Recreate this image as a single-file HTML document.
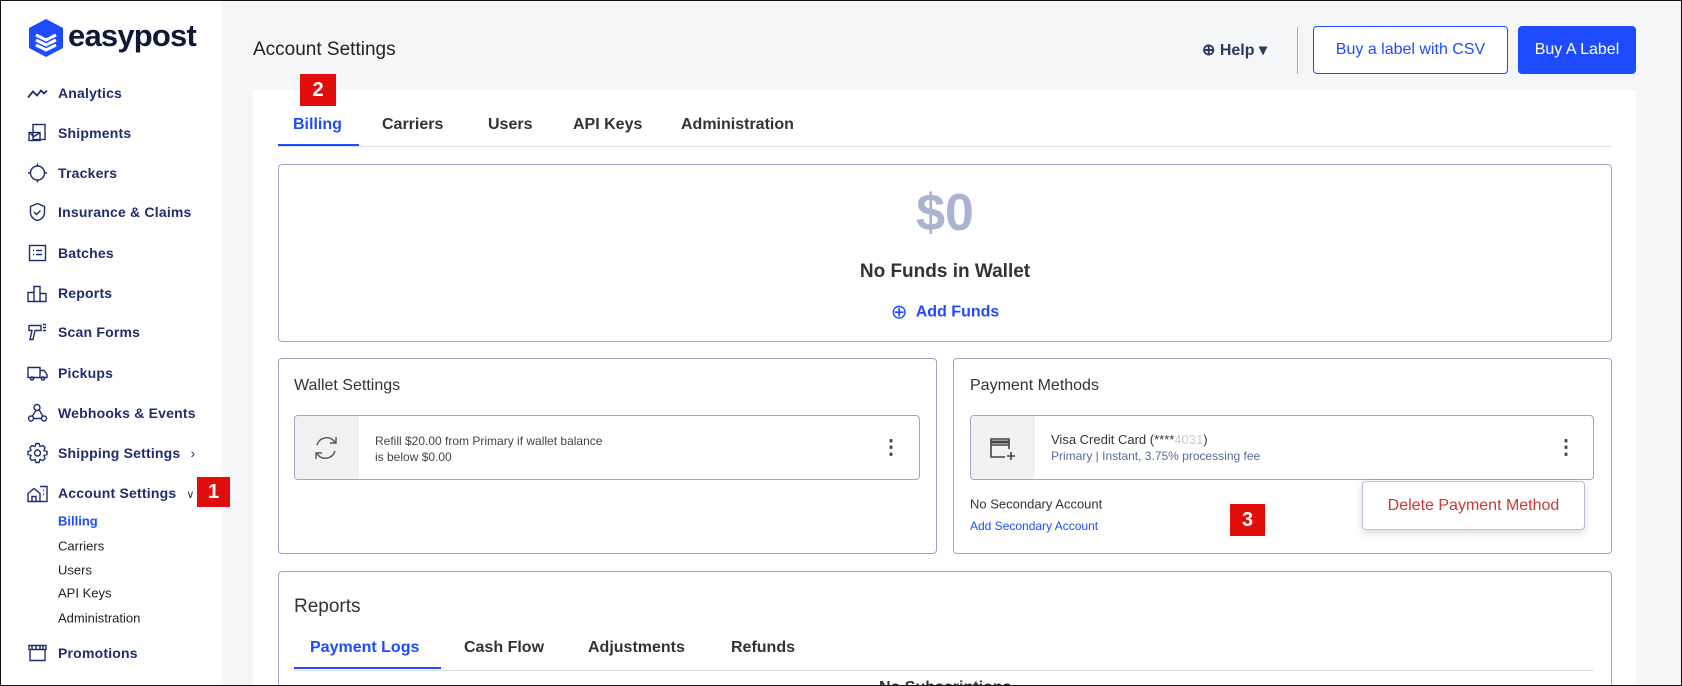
<!DOCTYPE html>
<html><head><meta charset="utf-8"><style>
*{box-sizing:border-box;margin:0;padding:0}
html,body{width:1682px;height:686px;overflow:hidden}
body{background:#f4f6f8;font-family:"Liberation Sans",sans-serif}
#w{position:relative;width:1682px;height:686px;overflow:hidden;border:1px solid #111;background:#f4f6f8}
.a{position:absolute}
.side{left:0;top:0;width:221px;height:686px;background:#fff}
.nav{left:57px;font-size:14px;color:#1f2d6e;font-weight:bold;letter-spacing:.2px;transform:translateY(-50%)}
.ic{left:26px;width:21px;height:21px;transform:translateY(-50%)}
.sub{left:57px;font-size:13px;color:#222;transform:translateY(-50%)}
.badge{background:#e10d0d;color:#fff;font-weight:bold;font-size:20px;display:flex;align-items:center;justify-content:center}
.box{border:1px solid #9aa6c8;border-radius:4px;background:#fff}
.c{transform:translateY(-50%)}
</style></head><body><div id="w">
<div class="a side"></div>
<svg class="a" style="left:26px;top:17px" width="38" height="40" viewBox="0 0 38 40"><path d="M19 1 36 10v20L19 39 2 30V10z" fill="#1f4bff"/><path d="M9 17l10 5 10-5M9 22l10 5 10-5M9 27l10 5 10-5" stroke="#fff" stroke-width="3" fill="none"/></svg>
<div class="a" style="left:67px;top:17px;font-size:31px;font-weight:bold;color:#10183a;letter-spacing:-0.8px">easypost</div>

<svg class="a ic" style="top:92px" viewBox="0 0 21 21"><path d="M1 15l5-6 4 4 4-5 3 3 3-3" stroke="#1f2d6e" stroke-width="1.8" fill="none"/></svg><div class="a nav" style="top:92px">Analytics</div>
<svg class="a ic" style="top:132px" viewBox="0 0 21 21" fill="none" stroke="#1f2d6e" stroke-width="1.4"><rect x="6" y="2" width="12" height="15"/><rect x="2" y="10" width="11" height="8"/><path d="M2 10l5 4 6-4"/></svg><div class="a nav" style="top:132px">Shipments</div>
<svg class="a ic" style="top:172px" viewBox="0 0 21 21" fill="none" stroke="#1f2d6e" stroke-width="1.4"><circle cx="10.5" cy="10.5" r="7"/><path d="M10.5 1v3M10.5 17v3M1 10.5h3M17 10.5h3"/></svg><div class="a nav" style="top:172px">Trackers</div>
<svg class="a ic" style="top:211px" viewBox="0 0 21 21" fill="none" stroke="#1f2d6e" stroke-width="1.4"><path d="M10.5 2l7 3v6c0 4-3 7-7 8-4-1-7-4-7-8V5z"/><path d="M7 10.5l2.5 2.5 4-4"/></svg><div class="a nav" style="top:211px">Insurance &amp; Claims</div>
<svg class="a ic" style="top:252px" viewBox="0 0 21 21" fill="none" stroke="#1f2d6e" stroke-width="1.4"><rect x="2.5" y="3" width="16" height="15"/><path d="M6 8h1M9 8h6M6 12h1M9 12h6"/></svg><div class="a nav" style="top:252px">Batches</div>
<svg class="a ic" style="top:292px" viewBox="0 0 21 21" fill="none" stroke="#1f2d6e" stroke-width="1.4"><path d="M1 19V10h6V4h6v7h6v8zM7 10v9M13 11v8"/></svg><div class="a nav" style="top:292px">Reports</div>
<svg class="a ic" style="top:331px" viewBox="0 0 21 21" fill="none" stroke="#1f2d6e" stroke-width="1.4"><path d="M2 4h12v5H8l-2 9H3l2-9H2zM16 3h3M16 6h3M16 9h3"/></svg><div class="a nav" style="top:331px">Scan Forms</div>
<svg class="a ic" style="top:372px" viewBox="0 0 21 21" fill="none" stroke="#1f2d6e" stroke-width="1.4"><path d="M1 5h12v10H1zM13 8h4l3 4v3h-7"/><circle cx="5" cy="16" r="1.6"/><circle cx="16" cy="16" r="1.6"/></svg><div class="a nav" style="top:372px">Pickups</div>
<svg class="a ic" style="top:412px" viewBox="0 0 21 21" fill="none" stroke="#1f2d6e" stroke-width="1.4"><circle cx="10" cy="5" r="3"/><circle cx="4" cy="16" r="2.5"/><circle cx="17" cy="16" r="2.5"/><path d="M9 8l-4 6M7 16h8M12 7l4 7"/></svg><div class="a nav" style="top:412px">Webhooks &amp; Events</div>
<svg class="a ic" style="top:452px" viewBox="0 0 21 21" fill="none" stroke="#1f2d6e" stroke-width="1.4"><circle cx="10.5" cy="10.5" r="3"/><path d="M9 1h3l1 3 3-1 2 2-1 3 3 1v3l-3 1 1 3-2 2-3-1-1 3H9l-1-3-3 1-2-2 1-3-3-1V9l3-1-1-3 2-2 3 1z"/></svg><div class="a nav" style="top:452px">Shipping Settings <span style="font-weight:normal;margin-left:6px">›</span></div>
<svg class="a ic" style="top:492px" viewBox="0 0 21 21" fill="none" stroke="#1f2d6e" stroke-width="1.4"><path d="M1 19V11l6-5 6 5v8zM13 4h7v15h-7M5 19v-5h4v5M16 8h1M16 12h1"/></svg><div class="a nav" style="top:492px">Account Settings <span style="font-weight:normal;margin-left:6px;font-size:11px">∨</span></div>
<div class="a sub" style="top:520px;color:#1f4bff;font-weight:bold">Billing</div>
<div class="a sub" style="top:545px">Carriers</div>
<div class="a sub" style="top:569px">Users</div>
<div class="a sub" style="top:592px">API Keys</div>
<div class="a sub" style="top:617px">Administration</div>
<svg class="a ic" style="top:652px" viewBox="0 0 21 21" fill="none" stroke="#1f2d6e" stroke-width="1.4"><path d="M2 3h17v4H2zM3 7v11h15V7M5 3v4M9 3v4M13 3v4M16 3v4"/></svg><div class="a nav" style="top:652px">Promotions</div>
<div class="a badge" style="left:196px;top:476px;width:33px;height:30px">1</div>

<div class="a c" style="left:252px;top:49px;font-size:19px;color:#222">Account Settings</div>
<div class="a c" style="left:1201px;top:49px;font-size:16px;font-weight:bold;color:#2d3a5e">⊕ Help ▾</div>
<div class="a" style="left:1296px;top:26px;width:1px;height:47px;background:#aab"></div>
<div class="a" style="left:1312px;top:25px;width:195px;height:48px;border:1px solid #1f4bff;border-radius:4px;color:#1f4bff;font-size:16px;display:flex;align-items:center;justify-content:center;background:#fff">Buy a label with CSV</div>
<div class="a" style="left:1517px;top:25px;width:118px;height:48px;background:#1f4bff;border-radius:4px;color:#fff;font-size:16px;display:flex;align-items:center;justify-content:center">Buy A Label</div>

<div class="a" style="left:252px;top:89px;width:1383px;height:600px;background:#fff"></div>
<div class="a badge" style="left:299px;top:73px;width:36px;height:32px">2</div>
<div class="a" style="left:277px;top:145px;width:1334px;height:1px;background:#dde1ea"></div>
<div class="a" style="left:277px;top:143px;width:81px;height:2px;background:#1f4bff"></div>
<div class="a c" style="left:292px;top:124px;font-size:16px;font-weight:bold;color:#1f4bff">Billing</div>
<div class="a c" style="left:381px;top:124px;font-size:16px;font-weight:bold;color:#333">Carriers</div>
<div class="a c" style="left:487px;top:124px;font-size:16px;font-weight:bold;color:#333">Users</div>
<div class="a c" style="left:572px;top:124px;font-size:16px;font-weight:bold;color:#333">API Keys</div>
<div class="a c" style="left:680px;top:124px;font-size:16px;font-weight:bold;color:#333">Administration</div>

<div class="a box" style="left:277px;top:163px;width:1334px;height:178px"></div>
<div class="a c" style="left:277px;width:1334px;text-align:center;top:212px;font-size:52px;font-weight:bold;color:#a9b4cf">$0</div>
<div class="a c" style="left:277px;width:1334px;text-align:center;top:271px;font-size:19px;font-weight:bold;color:#333">No Funds in Wallet</div>
<div class="a c" style="left:277px;width:1334px;text-align:center;top:311px;font-size:16px;font-weight:bold;color:#1f4bff"><span style="font-weight:normal;font-size:20px;vertical-align:-2px">⊕</span>&nbsp; Add Funds</div>

<div class="a box" style="left:277px;top:357px;width:659px;height:196px"></div>
<div class="a c" style="left:293px;top:385px;font-size:16px;color:#333">Wallet Settings</div>
<div class="a box" style="left:293px;top:414px;width:626px;height:65px;overflow:hidden"><div style="width:64px;height:100%;background:#f1f1f1"></div></div>
<svg class="a" style="left:310px;top:432px" width="30" height="30" viewBox="0 0 30 30" fill="none" stroke="#555" stroke-width="1.4"><path d="M6 12a10 10 0 0 1 17-4l2 2M24 18a10 10 0 0 1-17 4l-2-2M25 4v6h-6M5 26v-6h6"/></svg>
<div class="a" style="left:374px;top:432px;font-size:12px;color:#444;line-height:16px">Refill $20.00 from Primary if wallet balance<br>is below $0.00</div>
<div class="a c" style="left:880px;top:446px;font-size:20px;color:#444;font-weight:bold">⋮</div>

<div class="a box" style="left:952px;top:357px;width:659px;height:196px"></div>
<div class="a c" style="left:969px;top:385px;font-size:16px;color:#333">Payment Methods</div>
<div class="a box" style="left:969px;top:414px;width:624px;height:65px;overflow:hidden"><div style="width:64px;height:100%;background:#f1f1f1"></div></div>
<svg class="a" style="left:988px;top:436px" width="28" height="24" viewBox="0 0 28 24" fill="none" stroke="#444" stroke-width="1.6"><path d="M16 20H2V2h18v10M2 8h18"/><path d="M2 5h18" stroke-width="3"/><path d="M22 15v8M18 19h8"/></svg>
<div class="a" style="left:1050px;top:431px;font-size:13px;color:#333">Visa Credit Card (****<span style="color:#ccc">4031</span>)</div>
<div class="a" style="left:1050px;top:448px;font-size:12px;color:#5a6a9a">Primary | Instant, 3.75% processing fee</div>
<div class="a c" style="left:1555px;top:446px;font-size:20px;color:#444;font-weight:bold">⋮</div>
<div class="a c" style="left:969px;top:503px;font-size:13px;color:#333">No Secondary Account</div>
<div class="a c" style="left:969px;top:525px;font-size:12px;color:#1f4bff">Add Secondary Account</div>
<div class="a badge" style="left:1229px;top:503px;width:35px;height:32px">3</div>
<div class="a" style="left:1361px;top:480px;width:223px;height:49px;background:#fff;border:1px solid #b8c0d8;border-radius:4px;box-shadow:0 3px 8px rgba(0,0,40,.15);display:flex;align-items:center;justify-content:center;color:#c8383a;font-size:16px">Delete Payment Method</div>

<div class="a box" style="left:277px;top:570px;width:1334px;height:130px"></div>
<div class="a c" style="left:293px;top:606px;font-size:19px;color:#333">Reports</div>
<div class="a" style="left:293px;top:669px;width:1300px;height:1px;background:#dde1ea"></div>
<div class="a" style="left:293px;top:666px;width:147px;height:2px;background:#1f4bff"></div>
<div class="a c" style="left:309px;top:647px;font-size:16px;font-weight:bold;color:#1f4bff">Payment Logs</div>
<div class="a c" style="left:463px;top:647px;font-size:16px;font-weight:bold;color:#333">Cash Flow</div>
<div class="a c" style="left:587px;top:647px;font-size:16px;font-weight:bold;color:#333">Adjustments</div>
<div class="a c" style="left:730px;top:647px;font-size:16px;font-weight:bold;color:#333">Refunds</div>
<div class="a" style="left:878px;top:678px;font-size:16px;font-weight:bold;color:#333">No Subscriptions</div>
<div class="a" style="left:0;top:684px;width:1682px;height:2px;background:#111"></div>
</div></body></html>
